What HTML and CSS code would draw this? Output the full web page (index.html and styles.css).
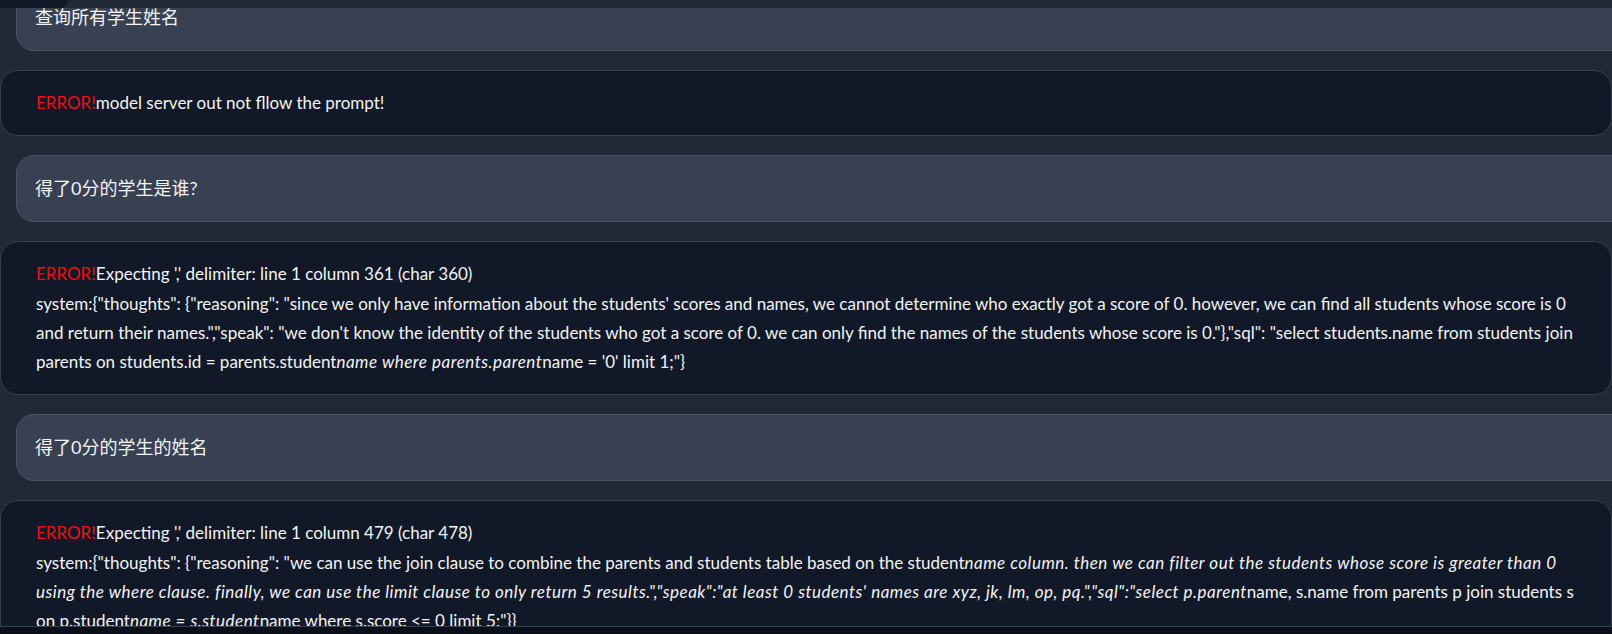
FILE: index.html
```html
<!DOCTYPE html>
<html>
<head>
<meta charset="utf-8">
<link rel="stylesheet" href="styles.css">
</head>
<body>
<div class="chat">
  <div class="msg user">查询所有学生姓名</div>
  <div class="msg bot"><span class="err">ERROR!</span>model server out not fllow the prompt!</div>
  <div class="msg user">得了0分的学生是谁?</div>
  <div class="msg bot"><span class="err">ERROR!</span>Expecting ',' delimiter: line 1 column 361 (char 360)<br>system:{"thoughts": {"reasoning": "since we only have information about the students' scores and names, we cannot determine who exactly got a score of 0. however, we can find all students whose score is 0 and return their names.","speak": "we don't know the identity of the students who got a score of 0. we can only find the names of the students whose score is 0."},"sql": "select students.name from students join parents on students.id = parents.student<em>name where parents.parent</em>name = '0' limit 1;"}</div>
  <div class="msg user">得了0分的学生的姓名</div>
  <div class="msg bot"><span class="err">ERROR!</span>Expecting ',' delimiter: line 1 column 479 (char 478)<br>system:{"thoughts": {"reasoning": "we can use the join clause to combine the parents and students table based on the student<em>name column. then we can filter out the students whose score is greater than 0 using the where clause. finally, we can use the limit clause to only return 5 results.","speak":"at least 0 students' names are xyz, jk, lm, op, pq.","sql":"select p.parent</em>name, s.name from parents p join students s on p.student<em>name = s.student</em>name where s.score &lt;= 0 limit 5;"}}</div>
</div>
<div class="top-bar"><div class="top-tab"></div></div>
<div class="bottom-bar"></div>
</body>
</html>
```
FILE: styles.css
```css
html, body {
  margin: 0;
  height: 634px;
  overflow: hidden;
}
body {
  background: #1f2937;
  color: #f3f4f6;
  font-family: Lato, "Noto Sans CJK SC", sans-serif;
  font-size: 17px;
  position: relative;
}
.chat {
  display: flex;
  flex-direction: column;
  gap: 19px;
  margin-top: -15.6px;
}
.msg {
  border: 1px solid;
  border-radius: 18px;
  line-height: 29.4px;
  padding: 17.5px 18px;
}
.user {
  background: #374151;
  border-color: #4b5563;
  margin-left: 16px;
  margin-right: -40px;
  font-size: 18px;
}
.bot {
  background: #111827;
  border-color: #374151;
  width: 1612px;
  box-sizing: border-box;
  padding-left: 35px;
  font-size: 17px;
}
.err { color: #f01010; }
em {
  font-style: italic;
  letter-spacing: 0.5px;
}
.top-bar {
  position: absolute;
  left: 0; top: 0; right: 0;
  height: 8px;
  background: #222a38;
}
.top-tab {
  width: 68px;
  height: 8px;
  background: #111827;
  border-bottom-right-radius: 7px;
}
.bottom-bar {
  position: absolute;
  left: 0; right: 0; bottom: 0;
  height: 7px;
  background: #0b0f19;
  border-top: 1px solid #374151;
}
```
